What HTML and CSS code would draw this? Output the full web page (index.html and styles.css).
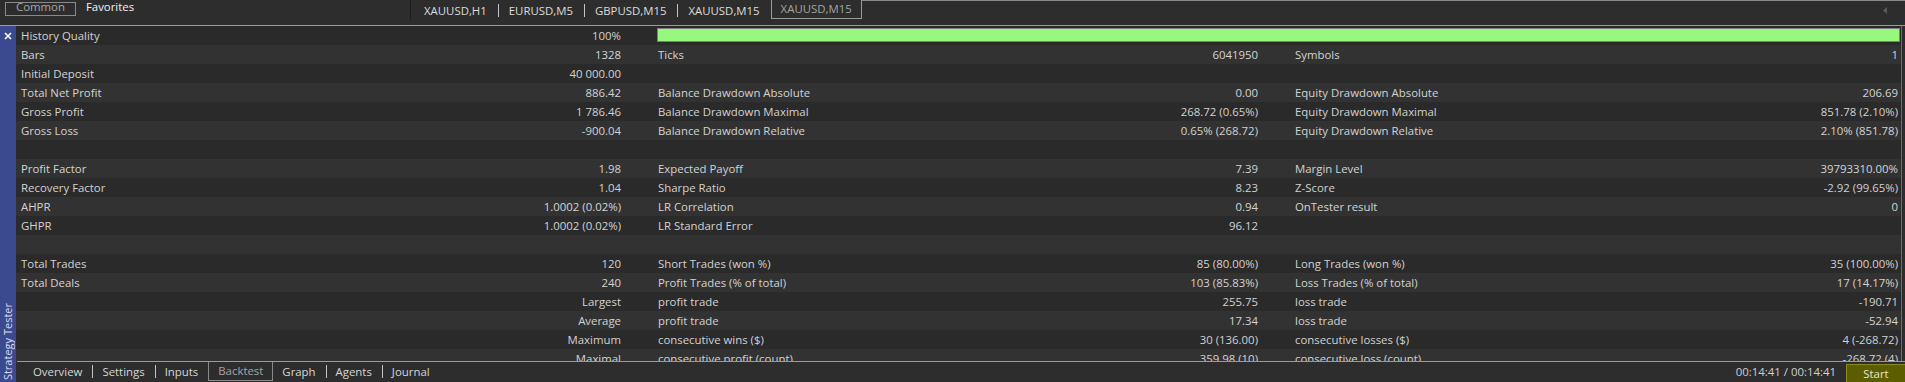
FILE: index.html
```html
<!DOCTYPE html>
<html lang="en">
<head>
    <meta charset="UTF-8">
    <title>Strategy Tester</title>
    <link rel="stylesheet" href="styles.css">
</head>
<body>
<div class="app">
    <div class="topbar">
        <div class="groups">
            <span class="group-btn">Common</span>
            <span class="group-name">Favorites</span>
        </div>
        <div class="charts">
            <div class="chart-list">
                <span class="chart">XAUUSD,H1</span><i class="sep"></i>
                <span class="chart">EURUSD,M5</span><i class="sep"></i>
                <span class="chart">GBPUSD,M15</span><i class="sep"></i>
                <span class="chart">XAUUSD,M15</span>
                <span class="chart is-active">XAUUSD,M15</span>
            </div>
            <div class="chart-fill">
                <svg width="4" height="7" viewBox="0 0 4 7"><path d="M4 0 L0 3.5 L4 7 Z" fill="#5a5a5a"/></svg>
            </div>
        </div>
    </div>

    <div class="main">
        <div class="side">
            <svg class="side-close" width="8" height="8" viewBox="0 0 8 8"><path d="M1 1 L7 7 M7 1 L1 7" stroke="#fff" stroke-width="1.6"/></svg>
            <span class="side-title">Strategy Tester</span>
        </div>

        <div class="panel">
            <div class="stats">
                <div class="row">
                    <div class="cell"><span>History Quality</span><span>100%</span></div>
                    <div class="quality-bar"></div>
                </div>
                <div class="row">
                    <div class="cell"><span>Bars</span><span>1328</span></div>
                    <div class="cell"><span>Ticks</span><span>6041950</span></div>
                    <div class="cell"><span>Symbols</span><span>1</span></div>
                </div>
                <div class="row">
                    <div class="cell"><span>Initial Deposit</span><span>40 000.00</span></div>
                    <div class="cell"></div>
                    <div class="cell"></div>
                </div>
                <div class="row">
                    <div class="cell"><span>Total Net Profit</span><span>886.42</span></div>
                    <div class="cell"><span>Balance Drawdown Absolute</span><span>0.00</span></div>
                    <div class="cell"><span>Equity Drawdown Absolute</span><span>206.69</span></div>
                </div>
                <div class="row">
                    <div class="cell"><span>Gross Profit</span><span>1 786.46</span></div>
                    <div class="cell"><span>Balance Drawdown Maximal</span><span>268.72 (0.65%)</span></div>
                    <div class="cell"><span>Equity Drawdown Maximal</span><span>851.78 (2.10%)</span></div>
                </div>
                <div class="row">
                    <div class="cell"><span>Gross Loss</span><span>-900.04</span></div>
                    <div class="cell"><span>Balance Drawdown Relative</span><span>0.65% (268.72)</span></div>
                    <div class="cell"><span>Equity Drawdown Relative</span><span>2.10% (851.78)</span></div>
                </div>
                <div class="row"></div>
                <div class="row">
                    <div class="cell"><span>Profit Factor</span><span>1.98</span></div>
                    <div class="cell"><span>Expected Payoff</span><span>7.39</span></div>
                    <div class="cell"><span>Margin Level</span><span>39793310.00%</span></div>
                </div>
                <div class="row">
                    <div class="cell"><span>Recovery Factor</span><span>1.04</span></div>
                    <div class="cell"><span>Sharpe Ratio</span><span>8.23</span></div>
                    <div class="cell"><span>Z-Score</span><span>-2.92 (99.65%)</span></div>
                </div>
                <div class="row">
                    <div class="cell"><span>AHPR</span><span>1.0002 (0.02%)</span></div>
                    <div class="cell"><span>LR Correlation</span><span>0.94</span></div>
                    <div class="cell"><span>OnTester result</span><span>0</span></div>
                </div>
                <div class="row">
                    <div class="cell"><span>GHPR</span><span>1.0002 (0.02%)</span></div>
                    <div class="cell"><span>LR Standard Error</span><span>96.12</span></div>
                    <div class="cell"></div>
                </div>
                <div class="row"></div>
                <div class="row">
                    <div class="cell"><span>Total Trades</span><span>120</span></div>
                    <div class="cell"><span>Short Trades (won %)</span><span>85 (80.00%)</span></div>
                    <div class="cell"><span>Long Trades (won %)</span><span>35 (100.00%)</span></div>
                </div>
                <div class="row">
                    <div class="cell"><span>Total Deals</span><span>240</span></div>
                    <div class="cell"><span>Profit Trades (% of total)</span><span>103 (85.83%)</span></div>
                    <div class="cell"><span>Loss Trades (% of total)</span><span>17 (14.17%)</span></div>
                </div>
                <div class="row">
                    <div class="cell"><span></span><span>Largest</span></div>
                    <div class="cell"><span>profit trade</span><span>255.75</span></div>
                    <div class="cell"><span>loss trade</span><span>-190.71</span></div>
                </div>
                <div class="row">
                    <div class="cell"><span></span><span>Average</span></div>
                    <div class="cell"><span>profit trade</span><span>17.34</span></div>
                    <div class="cell"><span>loss trade</span><span>-52.94</span></div>
                </div>
                <div class="row">
                    <div class="cell"><span></span><span>Maximum</span></div>
                    <div class="cell"><span>consecutive wins ($)</span><span>30 (136.00)</span></div>
                    <div class="cell"><span>consecutive losses ($)</span><span>4 (-268.72)</span></div>
                </div>
                <div class="row">
                    <div class="cell"><span></span><span>Maximal</span></div>
                    <div class="cell"><span>consecutive profit (count)</span><span>359.98 (10)</span></div>
                    <div class="cell"><span>consecutive loss (count)</span><span>-268.72 (4)</span></div>
                </div>
            </div>

            <div class="bottombar">
                <div class="tabs">
                    <span class="tab">Overview</span><i class="tab-sep"></i>
                    <span class="tab">Settings</span><i class="tab-sep"></i>
                    <span class="tab">Inputs</span>
                    <span class="tab is-active">Backtest</span>
                    <span class="tab">Graph</span><i class="tab-sep"></i>
                    <span class="tab">Agents</span><i class="tab-sep"></i>
                    <span class="tab">Journal</span>
                </div>
                <span class="timer">00:14:41 / 00:14:41</span>
                <span class="start-btn">Start</span>
            </div>
        </div>
    </div>
</div>
</body>
</html>
```

FILE: styles.css
```css
html, body {margin:0;background:#2d2d2d;overflow:hidden;}
body {width:1905px;height:382px;font-family:"Open Sans","Liberation Sans",sans-serif;font-size:11.4px;color:#d2d2d2;}
i {font-style:normal;}

.app {display:flex;flex-direction:column;height:382px;}

/* top: symbol groups + chart tabs */
.topbar {display:flex;height:25px;border-bottom:1px solid #9a9a9a;background:#2d2d2d;flex-shrink:0;}
.groups {display:flex;align-items:flex-start;width:410px;padding-left:5px;box-sizing:border-box;flex-shrink:0;}
.group-btn {margin-top:2px;height:14px;line-height:8px;padding:0 10px;border:1px solid #8a8a8a;color:#a8a8a8;box-sizing:border-box;}
.group-name {margin-left:10px;line-height:13px;color:#f2f2f2;}

.charts {display:flex;flex:1;}
.chart-list {display:flex;align-items:flex-start;height:20px;padding-left:3px;border-left:1px solid #1c1c1c;}
.chart {padding:0 11px 0 10px;line-height:21px;color:#dcdcdc;white-space:nowrap;}
.chart.is-active {padding:0 9px;height:19px;line-height:17px;border:1px solid #9a9a9a;border-top:0;color:#a4a4a4;box-sizing:border-box;}
.sep {width:1px;height:13px;margin-top:4px;background:#c4c4c4;}
.chart-fill {flex:1;border-top:1px solid #8a8a8a;display:flex;justify-content:flex-end;align-items:flex-start;padding:6px 18px 0 0;}

/* main area */
.main {display:flex;height:356px;}
.side {width:16px;flex-shrink:0;background:#3b4a8e;display:flex;flex-direction:column;justify-content:space-between;align-items:center;}
.side-close {margin-top:6px;}
.side-title {writing-mode:vertical-rl;transform:rotate(180deg);line-height:16px;margin-bottom:2px;color:#d6dbf2;font-size:11px;white-space:nowrap;}

.panel {flex:1;display:flex;flex-direction:column;min-width:0;}
.stats {height:335px;overflow:hidden;margin-right:3px;border-right:1px solid #6c6c6c;}

.row {display:grid;grid-template-columns:638px 637px 1fr;height:19px;line-height:19px;background:#2a2a2a;}
.row:nth-child(even) {background:#323232;}
.cell {display:flex;justify-content:space-between;white-space:nowrap;padding:0 33px 0 4px;}
.cell:first-child {padding-left:5px;}
.cell:nth-child(3) {padding-right:3px;}
.quality-bar {grid-column:2 / 4;margin:2px 1px 3px 3px;background:#97f77f;border:1px solid #7d7d7d;}

/* bottom tabs */
.bottombar {display:flex;align-items:flex-start;height:20px;margin-left:1px;border-top:1px solid #9a9a9a;}
.tabs {display:flex;align-items:flex-start;padding-left:7px;}
.tab {padding:0 10px 0 9px;line-height:19px;color:#d6d6d6;}
.tab.is-active {padding:0 9px;height:19px;line-height:18px;border:1px solid #8a8a8a;border-top:0;color:#a4a4a4;box-sizing:border-box;}
.tab-sep {width:1px;height:13px;margin-top:3px;background:#c4c4c4;}
.timer {margin-left:auto;margin-right:10px;line-height:19px;color:#cfcfcf;}
.start-btn {width:59px;height:20px;margin-top:2px;line-height:17px;text-align:center;background:#5c5c00;border:1px solid #8a8a1c;border-right:0;color:#e6e6cc;box-sizing:border-box;}
```
